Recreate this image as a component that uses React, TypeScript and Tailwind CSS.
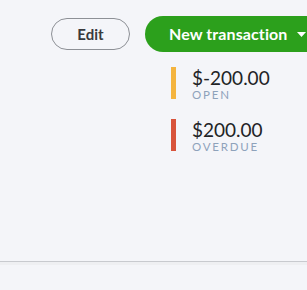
const statuses = [
  { amount: '$-200.00', label: 'OPEN', bar: 'bg-[#f4b43f]' },
  { amount: '$200.00', label: 'OVERDUE', bar: 'bg-[#d8533b]' },
];

export default function App() {
  return (
    <div
      className="w-[307px] h-[290px] overflow-hidden bg-[#f4f5f9] flex flex-col"
      style={{ fontFamily: 'Lato, "Open Sans", sans-serif' }}
    >
      <div className="flex items-center gap-[15px] pl-[51px] pt-[16px] h-[52px]">
        <button className="w-[79px] h-[32px] shrink-0 rounded-full border border-[#8d9096] bg-transparent text-[15px] font-bold text-[#393a3d]">
          Edit
        </button>
        <button className="w-[180px] h-[36px] shrink-0 rounded-full bg-[#2ca01c] text-white flex items-center pl-[24px] gap-[10px]">
          <span className="text-[16px] font-bold tracking-[0.1px]">New transaction</span>
          <svg width="9" height="5" viewBox="0 0 9 5" className="mt-[1px]">
            <path d="M0 0h9L4.5 5z" fill="white" />
          </svg>
        </button>
      </div>

      <div className="flex flex-col gap-[20px] pl-[171px] pt-[15px]">
        {statuses.map((s) => (
          <div key={s.label} className="flex h-[32px] gap-[16px]">
            <div className={`w-[5px] h-[32px] ${s.bar}`} />
            <div className="flex flex-col">
              <span className="text-[19px] leading-[19px] text-[#222326] mt-[1px]">{s.amount}</span>
              <span className="text-[11.5px] leading-[12px] tracking-[1.8px] text-[#8ea2bb] mt-[2px]">
                {s.label}
              </span>
            </div>
          </div>
        ))}
      </div>

      <div className="mt-auto mb-[25px]">
        <div className="h-px bg-[#c8cacf]" />
        <div className="h-[3px] bg-[#eeeff2]" />
      </div>
    </div>
  );
}
